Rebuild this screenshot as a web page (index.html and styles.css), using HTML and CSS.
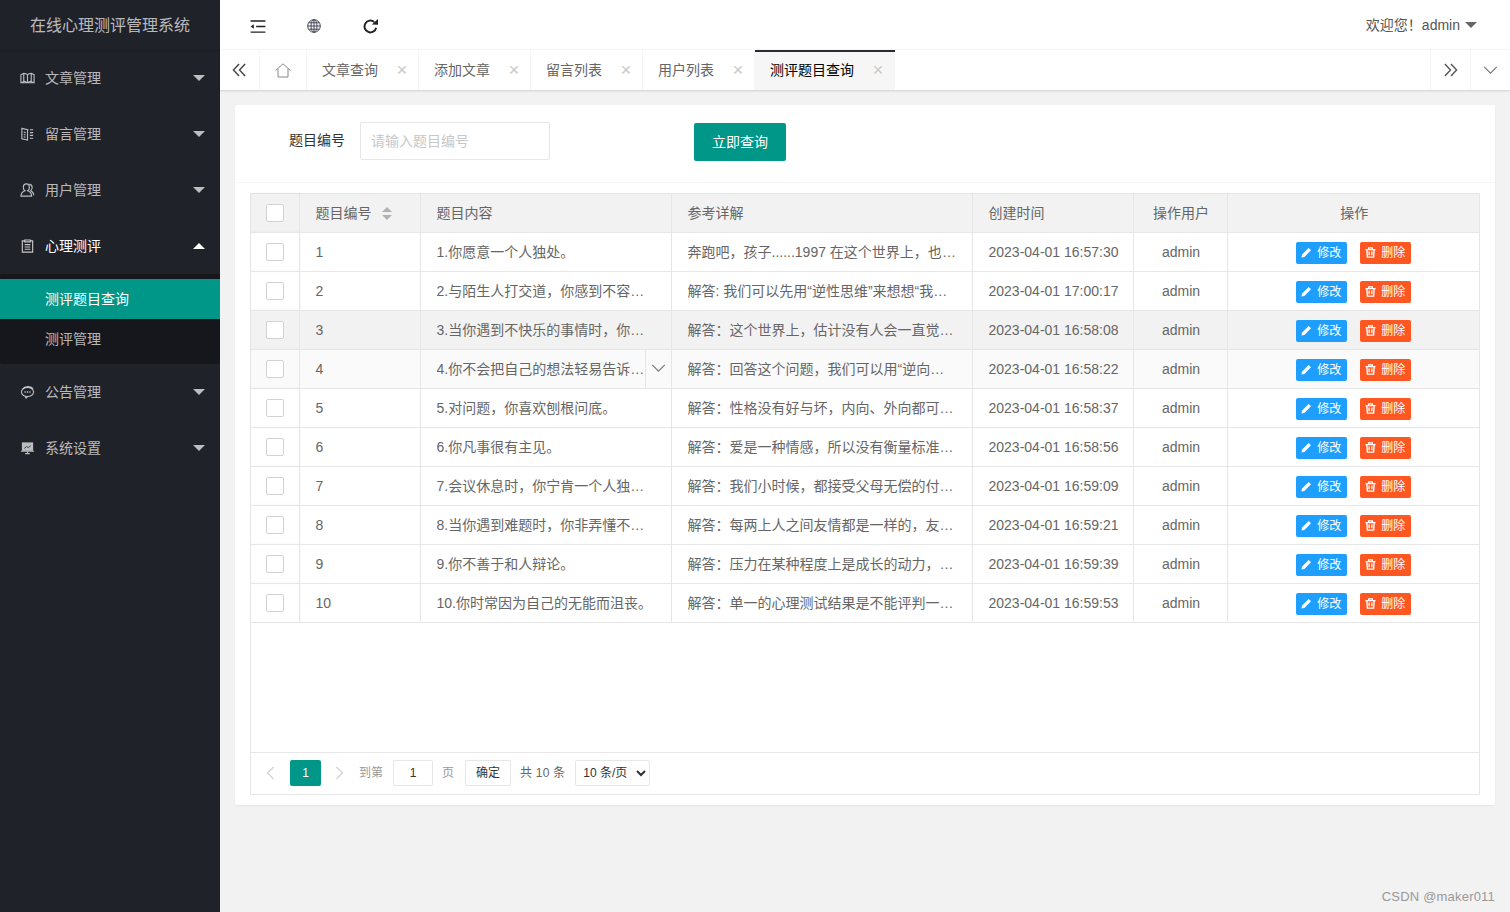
FILE: index.html
```html
<!DOCTYPE html>
<html lang="zh-CN">
<head>
<meta charset="utf-8">
<title>在线心理测评管理系统</title>
<link rel="stylesheet" href="styles.css">
</head>
<body>
<svg class="sprite" width="0" height="0" aria-hidden="true">
  <symbol id="i-pen" viewBox="0 0 12 12"><path d="M.5 11.500l.7-3.200L8.400 1.100l2.500 2.500-7.200 7.200z" fill="currentColor"/></symbol>
  <symbol id="i-trash" viewBox="0 0 12 12"><path d="M.5 2.800h11M4 2.800V1h4v1.800M2 3l.6 8h6.800l.6-8M4.500 5v4M7.500 5v4" fill="none" stroke="currentColor" stroke-width="1.500"/></symbol>
  <symbol id="i-down" viewBox="0 0 16 10"><path d="M1 1l7 7 7-7" fill="none" stroke="currentColor" stroke-width="1.300"/></symbol>
</svg>
<div class="app">
  <aside class="side">
    <div class="logo">在线心理测评管理系统</div>
    <nav class="menu">
      <a class="item"><svg class="mi" viewBox="0 0 16 14"><path d="M1 3.500l3-1.500c1.500 0 3 .5 4 1.500 1-1 2.500-1.500 4-1.500l3 1.500v8.500H1zM8 3.500V12M4 2v8.500M12 2v8.500M1 12l4-1.500L8 12l3-1.500 4 1.500" fill="none" stroke="currentColor" stroke-width="1.200"/></svg><span>文章管理</span><i class="tri"></i></a>
      <a class="item"><svg class="mi" viewBox="0 0 16 14"><path d="M2 1l6 1.500v11L2 12zM8 2.500h1M10.500 2.500H14M10.500 5.500H14M10.500 8.500H14M10.500 11.500H14M4 5l2 .5M4 7.500l2 .5M4 10l2 .5" fill="none" stroke="currentColor" stroke-width="1.200"/></svg><span>留言管理</span><i class="tri"></i></a>
      <a class="item"><svg class="mi" viewBox="0 0 16 15"><path d="M7 1c-2.200 0-3.500 1.900-3.500 3.900 0 1.500.7 2.800 1.800 3.500C3 9.300 1 11 1 14h11.500c0-3-2-4.700-4.300-5.600 1.100-.7 1.800-2 1.800-3.500C10 2.900 9 1 7 1z" fill="none" stroke="currentColor" stroke-width="1.200"/><path d="M10 1.200c2 .3 3 2 3 3.700 0 1.500-.7 2.500-1.500 3.300 1.800.8 3.200 2.700 3.200 5" fill="none" stroke="currentColor" stroke-width="1.200"/></svg><span>用户管理</span><i class="tri"></i></a>
      <a class="item item-open"><svg class="mi" viewBox="0 0 16 14"><path d="M5 1.500H2.500v12h11v-12H11M5 .6h6v2H5zM5 5.500h6M5 8h6M5 10.500h6" fill="none" stroke="currentColor" stroke-width="1.200"/></svg><span>心理测评</span><i class="tri tri-up"></i></a>
      <div class="sub">
        <a class="sub-item sub-on">测评题目查询</a>
        <a class="sub-item">测评管理</a>
      </div>
      <a class="item"><svg class="mi" viewBox="0 0 16 14"><ellipse cx="8" cy="7" rx="6.500" ry="4.800" fill="none" stroke="currentColor" stroke-width="1.200"/><path d="M3 3.500C5 .8 11 .3 14 3.500M5.500 12l1 1.500 1.500-1.500" fill="none" stroke="currentColor" stroke-width="1.200"/><path d="M4.800 7h1.400M7.300 7h1.400M9.800 7h1.400" stroke="currentColor" stroke-width="1.500"/></svg><span>公告管理</span><i class="tri"></i></a>
      <a class="item"><svg class="mi" viewBox="0 0 16 14"><path d="M2 1h12v9H2z" fill="currentColor"/><path d="M1 10.500h14M8 10.500v2M5.500 13h5" fill="none" stroke="currentColor" stroke-width="1.200"/><path d="M4.500 7.500l2.500-2 2 1 2.500-2" fill="none" stroke="#20222a" stroke-width=".8"/></svg><span>系统设置</span><i class="tri"></i></a>
    </nav>
  </aside>
  <main class="main">
    <header class="top">
      <div class="top-tools">
        <svg class="ti ti-fold" viewBox="0 0 16 14"><path d="M0 1h16M6 7h10M0 13h16" stroke="#222" stroke-width="1.500" fill="none"/><path d="M0 7l3.500-2.500v5z" fill="#222"/></svg>
        <svg class="ti ti-globe" viewBox="0 0 14 14"><g fill="none" stroke="#445" stroke-width="1"><circle cx="7" cy="7" r="6.300"/><ellipse cx="7" cy="7" rx="3" ry="6.300"/><path d="M7 .7v12.600M.7 7h12.600M1.600 3.800h10.800M1.600 10.200h10.800"/></g></svg>
        <svg class="ti ti-refresh" viewBox="0 0 14 14"><path d="M12.300 8.200A5.500 5.500 0 1 1 10.500 2.800" fill="none" stroke="#222" stroke-width="1.800"/><path d="M8.200 5.200L14 5.400V0z" fill="#222"/></svg>
      </div>
      <div class="user"><span>欢迎您！admin</span><i class="tri tri-dark"></i></div>
    </header>
    <div class="tabs">
      <div class="tab-btn"><svg class="chev" viewBox="0 0 16 14"><path d="M7.500 .5L1.500 7l6 6.500M14 .5L8 7l6 6.500" fill="none" stroke="#444" stroke-width="1.500"/></svg></div>
      <div class="tab-home"><svg class="home" viewBox="0 0 16 15"><path d="M.6 7.500L8 .8l7.400 6.700M3 6v8h10V6" fill="none" stroke="#888"/></svg></div>
      <div class="tab"><span>文章查询</span><b class="x">×</b></div>
      <div class="tab"><span>添加文章</span><b class="x">×</b></div>
      <div class="tab"><span>留言列表</span><b class="x">×</b></div>
      <div class="tab"><span>用户列表</span><b class="x">×</b></div>
      <div class="tab tab-on"><span>测评题目查询</span><b class="x">×</b></div>
      <div class="tab-fill"></div>
      <div class="tab-btn tab-btn-r"><svg class="chev" viewBox="0 0 16 14"><path d="M2 .5L8 7l-6 6.500M8.500 .5l6 6.500-6 6.500" fill="none" stroke="#555" stroke-width="1.500"/></svg></div>
      <div class="tab-btn tab-btn-r"><svg class="chev-d" viewBox="0 0 16 10"><use href="#i-down"/></svg></div>
    </div>
    <div class="content">
      <section class="card">
        <form class="search">
          <label class="search-label">题目编号</label>
          <input class="search-input" type="text" placeholder="请输入题目编号">
          <button class="search-btn" type="button">立即查询</button>
        </form>
        <div class="body">
          <div class="grid">
            <table class="tbl">
              <colgroup><col class="c1"><col class="c2"><col class="c3"><col class="c4"><col class="c5"><col class="c6"><col class="c7"></colgroup>
              <thead>
                <tr>
                  <th class="ck"><i class="box"></i></th>
                  <th>题目编号<i class="sort"></i></th>
                  <th>题目内容</th>
                  <th>参考详解</th>
                  <th>创建时间</th>
                  <th class="mid">操作用户</th>
                  <th class="mid">操作</th>
                </tr>
              </thead>
              <tbody>
                <tr><td class="ck"><i class="box"></i></td><td>1</td><td><div class="cell">1.你愿意一个人独处。</div></td><td><div class="cell">奔跑吧，孩子......1997 在这个世界上，也许没有人能够</div></td><td>2023-04-01 16:57:30</td><td class="mid">admin</td><td class="mid"><div class="ops"><a class="op op-e"><svg class="oi"><use href="#i-pen"/></svg>修改</a><a class="op op-d"><svg class="oi"><use href="#i-trash"/></svg>删除</a></div></td></tr>
                <tr><td class="ck"><i class="box"></i></td><td>2</td><td><div class="cell">2.与陌生人打交道，你感到不容易相处。</div></td><td><div class="cell">解答: 我们可以先用“逆性思维”来想想“我为什么会这样”</div></td><td>2023-04-01 17:00:17</td><td class="mid">admin</td><td class="mid"><div class="ops"><a class="op op-e"><svg class="oi"><use href="#i-pen"/></svg>修改</a><a class="op op-d"><svg class="oi"><use href="#i-trash"/></svg>删除</a></div></td></tr>
                <tr class="hover"><td class="ck"><i class="box"></i></td><td>3</td><td><div class="cell">3.当你遇到不快乐的事情时，你会怎么做呢？</div></td><td><div class="cell">解答：这个世界上，估计没有人会一直觉得快乐吧，所以</div></td><td>2023-04-01 16:58:08</td><td class="mid">admin</td><td class="mid"><div class="ops"><a class="op op-e"><svg class="oi"><use href="#i-pen"/></svg>修改</a><a class="op op-d"><svg class="oi"><use href="#i-trash"/></svg>删除</a></div></td></tr>
                <tr class="soft"><td class="ck"><i class="box"></i></td><td>4</td><td class="has-more"><div class="cell cell-more">4.你不会把自己的想法轻易告诉别人的吧。</div><span class="more"><svg class="chev-d" viewBox="0 0 16 10"><use href="#i-down"/></svg></span></td><td><div class="cell cell-short">解答：回答这个问题，我们可以用“逆向思维”来想想看吧</div></td><td>2023-04-01 16:58:22</td><td class="mid">admin</td><td class="mid"><div class="ops"><a class="op op-e"><svg class="oi"><use href="#i-pen"/></svg>修改</a><a class="op op-d"><svg class="oi"><use href="#i-trash"/></svg>删除</a></div></td></tr>
                <tr><td class="ck"><i class="box"></i></td><td>5</td><td><div class="cell">5.对问题，你喜欢刨根问底。</div></td><td><div class="cell">解答：性格没有好与坏，内向、外向都可以成就一番事业</div></td><td>2023-04-01 16:58:37</td><td class="mid">admin</td><td class="mid"><div class="ops"><a class="op op-e"><svg class="oi"><use href="#i-pen"/></svg>修改</a><a class="op op-d"><svg class="oi"><use href="#i-trash"/></svg>删除</a></div></td></tr>
                <tr><td class="ck"><i class="box"></i></td><td>6</td><td><div class="cell">6.你凡事很有主见。</div></td><td><div class="cell">解答：爱是一种情感，所以没有衡量标准，也没有对错之分</div></td><td>2023-04-01 16:58:56</td><td class="mid">admin</td><td class="mid"><div class="ops"><a class="op op-e"><svg class="oi"><use href="#i-pen"/></svg>修改</a><a class="op op-d"><svg class="oi"><use href="#i-trash"/></svg>删除</a></div></td></tr>
                <tr><td class="ck"><i class="box"></i></td><td>7</td><td><div class="cell">7.会议休息时，你宁肯一个人独自待着。</div></td><td><div class="cell">解答：我们小时候，都接受父母无偿的付出与关爱，长大</div></td><td>2023-04-01 16:59:09</td><td class="mid">admin</td><td class="mid"><div class="ops"><a class="op op-e"><svg class="oi"><use href="#i-pen"/></svg>修改</a><a class="op op-d"><svg class="oi"><use href="#i-trash"/></svg>删除</a></div></td></tr>
                <tr><td class="ck"><i class="box"></i></td><td>8</td><td><div class="cell">8.当你遇到难题时，你非弄懂不可才肯罢休。</div></td><td><div class="cell">解答：每两上人之间友情都是一样的，友情需要彼此维系</div></td><td>2023-04-01 16:59:21</td><td class="mid">admin</td><td class="mid"><div class="ops"><a class="op op-e"><svg class="oi"><use href="#i-pen"/></svg>修改</a><a class="op op-d"><svg class="oi"><use href="#i-trash"/></svg>删除</a></div></td></tr>
                <tr><td class="ck"><i class="box"></i></td><td>9</td><td><div class="cell">9.你不善于和人辩论。</div></td><td><div class="cell">解答：压力在某种程度上是成长的动力，适当的压力有益</div></td><td>2023-04-01 16:59:39</td><td class="mid">admin</td><td class="mid"><div class="ops"><a class="op op-e"><svg class="oi"><use href="#i-pen"/></svg>修改</a><a class="op op-d"><svg class="oi"><use href="#i-trash"/></svg>删除</a></div></td></tr>
                <tr><td class="ck"><i class="box"></i></td><td>10</td><td><div class="cell">10.你时常因为自己的无能而沮丧。</div></td><td><div class="cell">解答：单一的心理测试结果是不能评判一个人的心理健康</div></td><td>2023-04-01 16:59:53</td><td class="mid">admin</td><td class="mid"><div class="ops"><a class="op op-e"><svg class="oi"><use href="#i-pen"/></svg>修改</a><a class="op op-d"><svg class="oi"><use href="#i-trash"/></svg>删除</a></div></td></tr>
              </tbody>
            </table>
            <div class="pager">
              <svg class="pg-arrow" viewBox="0 0 8 14"><path d="M7 1L1 7l6 6" fill="none" stroke="#d2d2d2" stroke-width="1.300"/></svg>
              <span class="pg-cur">1</span>
              <svg class="pg-arrow pg-next" viewBox="0 0 8 14"><path d="M1 1l6 6-6 6" fill="none" stroke="#d2d2d2" stroke-width="1.300"/></svg>
              <span class="pg-muted pg-to">到第</span>
              <input class="pg-input" type="text" value="1">
              <span class="pg-muted pg-unit">页</span>
              <button class="pg-ok" type="button">确定</button>
              <span class="pg-count">共 10 条</span>
              <select class="pg-size"><option>10 条/页</option></select>
            </div>
          </div>
        </div>
      </section>
    </div>
  </main>
</div>
<div class="mark">CSDN @maker011</div>
</body>
</html>
```
FILE: styles.css
```css
* { box-sizing: border-box; }
html, body { margin: 0; height: 912px; overflow: hidden; }
body { font: 14px/1.5 "Liberation Sans", "Noto Sans CJK SC", sans-serif; color: #666; background: #f2f2f2; position: relative; }
.sprite { position: absolute; }
i, b { font-style: normal; }
.app { display: flex; height: 912px; }

.side { width: 220px; flex: none; background: #20222a; }
.logo { height: 50px; line-height: 52px; text-align: center; font-size: 16px; color: rgba(255,255,255,.7); box-shadow: 0 1px 2px rgba(0,0,0,.12); }
.item { height: 56px; display: flex; align-items: center; padding: 0 15px 0 20px; color: rgba(255,255,255,.7); position: relative; }
.item span { margin-left: 10px; flex: 1; }
.mi { width: 15px; height: 14px; flex: none; }
.item-open { color: #fff; }
.item-open .mi { color: rgba(255,255,255,.75); }
.tri { width: 0; height: 0; border: 6px solid transparent; border-top-color: rgba(255,255,255,.7); border-bottom-width: 0; }
.tri-up { border-top-width: 0; border-bottom-width: 6px; border-top-color: transparent; border-bottom-color: #fff; }
.tri-dark { border-top-color: #666; margin-left: 5px; }
.sub { background: rgba(0,0,0,.3); padding: 5px 0; border-radius: 2px; }
.sub-item { display: block; height: 40px; line-height: 40px; padding-left: 45px; color: rgba(255,255,255,.7); }
.sub-on { background: #009688; color: #fff; }

.main { flex: 1; min-width: 0; display: flex; flex-direction: column; }
.top { height: 49px; flex: none; background: #fff; display: flex; align-items: center; justify-content: space-between; padding: 0 33px 0 30px; }
.top-tools { display: flex; align-items: center; margin-top: 3px; }
.ti { display: block; flex: none; }
.ti-fold { width: 16px; height: 13px; }
.ti-globe { width: 14px; height: 14px; margin-left: 41px; }
.ti-refresh { width: 15px; height: 15px; margin-left: 42px; }
.user { display: flex; align-items: center; color: #555; margin-top: 1px; }

.tabs { height: 41px; flex: none; display: flex; background: #fff; border-top: 1px solid #f6f6f6; box-shadow: 0 1px 2px rgba(0,0,0,.15); position: relative; }
.tab-btn { width: 40px; display: flex; align-items: center; justify-content: center; border-right: 1px solid #f6f6f6; }
.tab-btn-r { border-right: 0; border-left: 1px solid #f6f6f6; }
.chev { width: 15px; height: 14px; }
.chev-d { width: 15px; height: 9px; color: #777; display: block; }
.tab-home { width: 47px; display: flex; align-items: center; justify-content: center; border-right: 1px solid #f6f6f6; }
.home { width: 16px; height: 15px; }
.tab { width: 112px; display: flex; align-items: center; padding-left: 15px; border-right: 1px solid #f6f6f6; }
.tab span { flex: 1; }
.x { width: 18px; margin-right: 7px; text-align: center; font-size: 18px; font-weight: 400; color: #c8c8c8; }
.tab-on { width: 140px; background: #f6f6f6; color: #000; border-top: 2px solid #292b34; border-right: 0; padding-bottom: 2px; }
.tab-on .x { margin-right: 8px; }
.tab-fill { flex: 1; }

.content { flex: 1; padding: 15px; min-height: 0; }
.card { height: 700px; background: #fff; border-radius: 2px; display: flex; flex-direction: column; box-shadow: 0 1px 2px rgba(0,0,0,.05); }
.search { height: 78px; flex: none; display: flex; align-items: flex-start; border-bottom: 1px solid #f6f6f6; padding-top: 17px; }
.search-label { margin: 8px 0 0 54px; width: 56px; color: #333; }
.search-input { width: 190px; height: 38px; margin-left: 15px; padding: 0 10px; border: 1px solid #e6e6e6; border-radius: 2px; font: inherit; color: #333; outline: 0; }
.search-input::placeholder { color: #c8c8c8; }
.search-btn { width: 92px; height: 38px; margin: 1px 0 0 144px; border: 0; border-radius: 2px; background: #009688; color: #fff; font: inherit; }
.body { flex: 1; padding: 10px 15px; min-height: 0; display: flex; }
.grid { flex: 1; border: 1px solid #e6e6e6; display: flex; flex-direction: column; }
.tbl { width: 100%; table-layout: fixed; border-collapse: collapse; }
.c1 { width: 48px; } .c2 { width: 121px; } .c3 { width: 251px; } .c4 { width: 301px; } .c5 { width: 161px; } .c6 { width: 94px; }
.tbl th, .tbl td { height: 39px; padding: 0 14px 0 16px; text-align: left; font-weight: 400; border: 1px solid #e6e6e6; border-top: 0; white-space: nowrap; color: #666; }
.tbl th { height: 38px; padding-top: 1px; }
.tbl td { padding-top: 2px; }
.tbl tr > :first-child { border-left: 0; }
.tbl tr > :last-child { border-right: 0; }
.tbl th { background: #f2f2f2; }
.tbl .mid { text-align: center; }
.tbl td:last-child { padding-left: 15px; padding-right: 15px; }
.tbl .ck { padding: 0; text-align: center; box-shadow: 1px 0 3px rgba(0,0,0,.05); }
.box { display: block; width: 18px; height: 18px; margin: 0 auto 0 15px; background: #fff; border: 1px solid #d2d2d2; border-radius: 2px; }
.hover td { background: #f2f2f2; }
.soft td { background: #fafafa; }
.cell { overflow: hidden; text-overflow: ellipsis; }
.sort { display: inline-block; position: relative; vertical-align: middle; width: 10px; height: 13px; margin: -2px 0 0 10px; }
.sort::before, .sort::after { content: ""; position: absolute; left: 0; border: 5px solid transparent; }
.sort::before { top: 0; border-top-width: 0; border-bottom-color: #b2b2b2; }
.sort::after { bottom: 0; border-bottom-width: 0; border-top-color: #b2b2b2; }
.has-more { position: relative; }
.cell-more { margin-right: 12px; }
.cell-short { margin-right: 11px; }
.more { position: absolute; right: 0; top: 0; bottom: 0; width: 26px; display: flex; align-items: center; justify-content: center; border-left: 1px solid #e6e6e6; }
.ops { display: flex; justify-content: center; gap: 13px; }
.op { width: 51px; height: 22px; display: flex; align-items: center; justify-content: center; border-radius: 2px; color: #fff; font-size: 12px; }
.op-e { background: #1e9fff; }
.op-d { background: #ff5722; }
.oi { width: 11px; height: 11px; margin-right: 5px; }
.pager { height: 42px; flex: none; margin-top: auto; border-top: 1px solid #e6e6e6; display: flex; align-items: center; padding: 0 0 1px 15px; font-size: 12px; }
.pg-arrow { width: 9px; height: 14px; }
.pg-cur { width: 31px; height: 26px; margin-left: 15px; background: #009688; color: #fff; text-align: center; line-height: 26px; border-radius: 2px; }
.pg-next { margin-left: 14px; }
.pg-muted { color: #999; }
.pg-to { margin-left: 15px; }
.pg-input { width: 40px; height: 26px; margin-left: 10px; border: 1px solid #e6e6e6; border-radius: 2px; text-align: center; font: inherit; color: #333; padding: 0; }
.pg-unit { margin-left: 9px; }
.pg-ok { width: 46px; height: 26px; margin-left: 11px; border: 1px solid #e6e6e6; border-radius: 2px; background: #fff; font: inherit; color: #333; padding: 0; }
.pg-count { margin-left: 9px; color: #666; letter-spacing: .2px; }
.pg-size { width: 75px; height: 26px; margin-left: 10px; border: 1px solid #e6e6e6; border-radius: 2px; background: #fff; font: inherit; color: #333; padding: 0 0 0 3px; }
.mark { position: absolute; right: 15px; bottom: 6px; font-size: 13px; letter-spacing: .2px; color: #999; }
```
